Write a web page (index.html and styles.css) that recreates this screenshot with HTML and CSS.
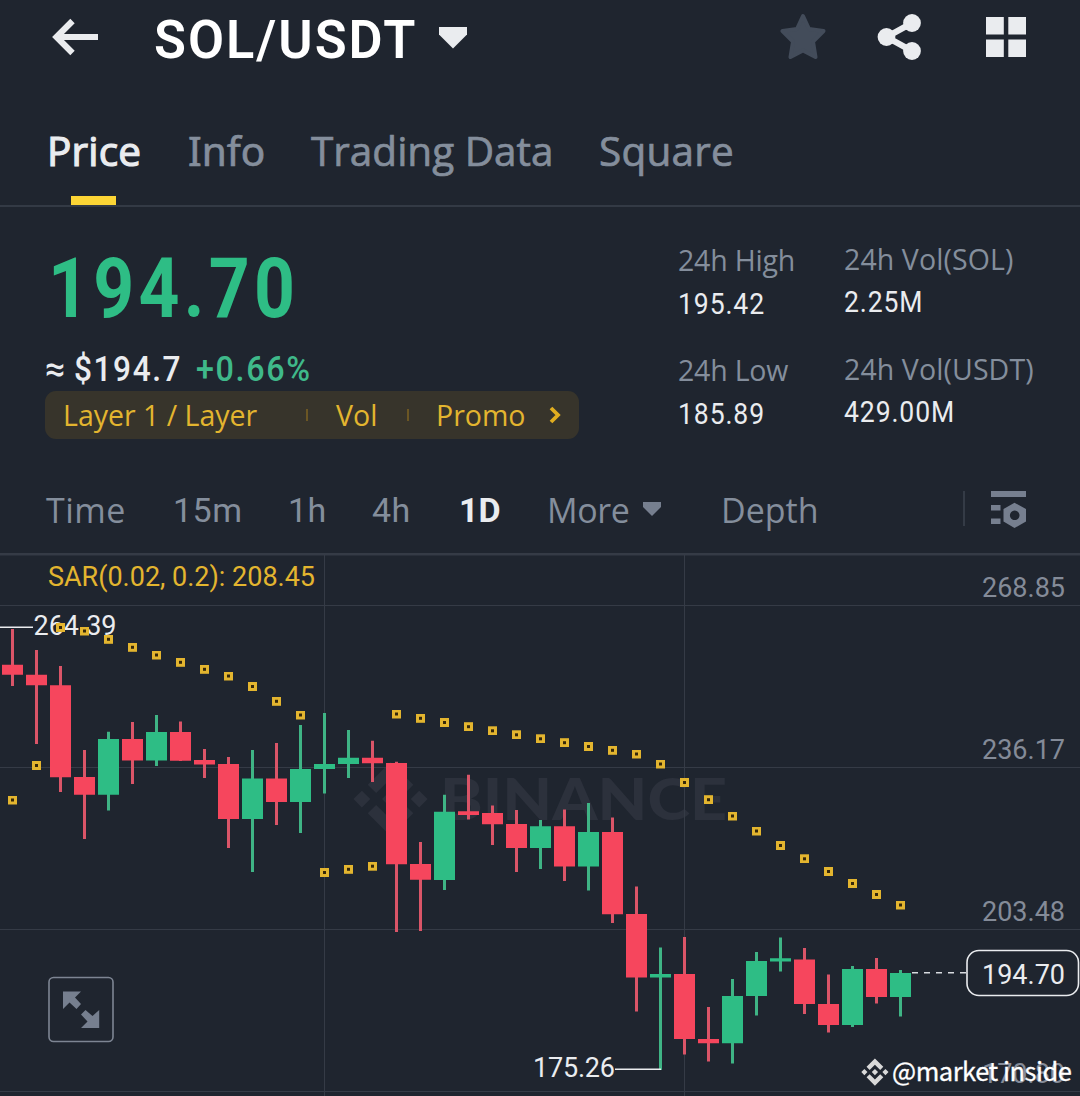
FILE: index.html
```html
<!DOCTYPE html>
<html lang="en">
<head>
<meta charset="utf-8">
<title>SOL/USDT</title>
<link rel="stylesheet" href="styles.css">
</head>
<body>
<div class="screen">
  <header class="topbar">
    <svg class="back" viewBox="0 0 46 38" width="46" height="38"><path d="M46 19H4M20.500 3L4.500 19l16 16" fill="none" stroke="#eaecef" stroke-width="6.200"/></svg>
    <h1 class="pair"><span>SOL/USDT</span></h1>
    <svg class="pair-caret" viewBox="0 0 28 22" width="28" height="22"><path d="M0 0h28v7.500L14 21.500 0 7.500z" fill="#eaecef"/></svg>
    <div class="actions">
      <svg viewBox="0 0 46 48" width="46" height="48"><path d="M23 3l6 13 14.500 2-10.500 10.500 2.500 15.500L23 37.500 10.500 44 13 28.500 2.500 18 17 16z" fill="#434c5a" stroke="#434c5a" stroke-width="4" stroke-linejoin="round"/></svg>
      <svg viewBox="0 0 44 48" width="44" height="48"><g fill="#eaecef"><circle cx="35" cy="10" r="8.900"/><circle cx="9.500" cy="24" r="8.900"/><circle cx="35" cy="38" r="8.900"/><path d="M35 10L9.500 24 35 38" fill="none" stroke="#eaecef" stroke-width="6"/></g></svg>
      <svg viewBox="0 0 40 40" width="40" height="40"><path d="M0 0h17.800v17.500H0zM22.300 0H40v17.500H22.300zM0 22.500h17.800V40H0zM22.300 22.500H40V40H22.300z" fill="#eaecef"/></svg>
    </div>
  </header>

  <nav class="tabs">
    <a class="tab active"><span class="t-price">Price</span></a>
    <a class="tab"><span class="t-info">Info</span></a>
    <a class="tab"><span class="t-data">Trading Data</span></a>
    <a class="tab"><span class="t-square">Square</span></a>
  </nav>

  <section class="summary">
    <div class="quote">
      <div class="last"><span>194.70</span></div>
      <div class="sub"><span class="approx">≈</span><span class="fiat"><span>$194.7</span></span><span class="change"><span>+0.66%</span></span></div>
      <div class="chip">
        <span class="c-layer">Layer 1 / Layer</span><i></i><span class="c-vol">Vol</span><i></i><span class="c-promo">Promo</span>
        <svg viewBox="0 0 12 18" width="12" height="18"><path d="M2 2l7 7-7 7" fill="none" stroke="#e0ad20" stroke-width="3.800"/></svg>
      </div>
    </div>
    <dl class="stats">
      <div><dt class="s-high">24h High</dt><dd>195.42</dd></div>
      <div><dt class="s-low">24h Low</dt><dd>185.89</dd></div>
    </dl>
    <dl class="stats volumes">
      <div><dt class="s-vsol">24h Vol(SOL)</dt><dd>2.25M</dd></div>
      <div><dt class="s-vusdt">24h Vol(USDT)</dt><dd>429.00M</dd></div>
    </dl>
  </section>

  <nav class="intervals">
    <span class="i-time">Time</span><span class="i-num">15m</span><span class="i-num">1h</span><span class="i-num">4h</span><span class="i-num selected">1D</span><span class="i-more">More</span>
    <svg class="more-caret" viewBox="0 0 18 14" width="18" height="14"><path d="M0 0h18v5L9 14 0 5z" fill="#767f8f"/></svg>
    <span class="i-depth">Depth</span>
    <b class="divider"></b>
    <svg class="settings" viewBox="0 0 36 38" width="36" height="38"><path d="M1 1h35v6H1zM1 15h9.500v5.500H1zM1 28.500h9.500V34H1z" fill="#767f8f"/><path fill-rule="evenodd" d="M24.500 12.800L36 19v12.500L24.500 38 13.500 31.500V19zM24.700 20.500a4.800 4.800 0 1 0 .01 0z" fill="#767f8f"/></svg>
  </nav>

  <svg class="chart" viewBox="0 552 1080 544" width="1080" height="544">
    <defs>
      <path id="logo" d="M38.730 53.200l24.590-24.580 24.600 24.600 14.300-14.310L63.320 0 24.420 38.900zM0 63.310l14.300-14.310 14.310 14.310-14.310 14.300zM38.730 73.410l24.590 24.590 24.600-24.600 14.310 14.290-38.900 38.910-38.910-38.880zM98 63.310l14.300-14.310 14.310 14.300-14.310 14.320zM77.830 63.300L63.320 48.780 48.810 63.280l14.510 14.500z"/>
      <marker id="sar" markerWidth="9" markerHeight="9" refX="4.500" refY="4.500" markerUnits="userSpaceOnUse"><path d="M0 0h9v9H0z" fill="#e3b52f"/><path d="M3 3h3v3H3z" fill="#35270a"/></marker>
    </defs>

    <g fill="#2c313c">
      <use href="#logo" transform="translate(353.500 762) scale(.585)"/>
      <text x="440" y="819.500" class="brand" textLength="287" lengthAdjust="spacingAndGlyphs">BINANCE</text>
    </g>

    <g class="grid">
      <path d="M0 554.300H1080" stroke-width="2.400"/>
      <path d="M0 605.500H1080M0 767.500H1080M0 929.500H1080M0 1091.500H1080M324.500 554V1096M684.500 554V1096"/>
    </g>

    <g class="axis">
      <text x="982" y="597" textLength="83">268.85</text>
      <text x="982" y="759" textLength="83">236.17</text>
      <text x="982" y="921" textLength="83">203.48</text>
      <text x="982" y="1083" textLength="83">170.80</text>
    </g>

    <path class="wick down" d="M12.500 629V686M36.500 650V744M60.500 666V792M84.500 750V839M132.500 722V784M180.500 721.500V761M204.500 749V778M228.500 757V848M276.500 743V825M372.500 740.700V782M396.500 761.700V932M420.500 842V931M468.500 774.700V819.500M492.500 805.500V845M516.500 810V872M564.500 809.500V881M612.500 817.500V923M636.500 886.500V1011.500M684.500 937V1054.500M708.500 1007V1061.500M804.500 948V1014M828.500 974.500V1032.500M876.500 958V1003.500"/>
    <path class="wick up" d="M108.500 731.700V810.500M156.500 715V766M252.500 750V872M300.500 725V833M324.500 713V793.500M348.500 730V778M444.500 794.700V890M540.500 820V869M588.500 803V890.500M660.500 947.500V1070M732.500 979V1063.500M756.500 952V1015.500M780.500 937.500V971.500M852.500 966V1027M900.500 970V1016.500"/>
    <path class="body down" d="M12.500 664.700V674.800M36.500 674.700V685.300M60.500 685.200V777.200M84.500 777V794.700M132.500 739V760.500M180.500 732V760.700M204.500 760V764.500M228.500 764V819M276.500 778.500V802M372.500 757.700V763.200M396.500 763V864.200M420.500 864V879.800M468.500 811.300V815M492.500 813V824.200M516.500 824V848M564.500 826.300V866.500M612.500 832V914.200M636.500 914V977.500M684.500 974V1039M708.500 1039V1043.300M804.500 959.500V1004M828.500 1004V1025M876.500 969V997"/>
    <path class="body up" d="M108.500 739V794.700M156.500 732V760.500M252.500 778.500V819M300.500 769V802M324.500 764V769M348.500 757.700V764M444.500 811.700V880M540.500 826.300V848M588.500 832V866.500M660.500 974V977.500M732.500 996V1043.200M756.500 961V996M780.500 958.300V961.500M852.500 969V1025M900.500 973V997"/>

    <path d="M912 972.700H966" stroke="#d8dbe0" stroke-width="1.600" stroke-dasharray="6"/>
    <rect x="967" y="950.500" width="111.500" height="45" rx="12" fill="#1f252f" stroke="#eaecef" stroke-width="1.600"/>
    <path d="M0 627.300H33M615 1069.300H661" stroke="#eaecef" stroke-width="1.600"/>
    <g class="mark">
      <text x="33.500" y="634.500" textLength="83">264.39</text>
      <text x="533" y="1077" textLength="82">175.26</text>
      <text x="982" y="984" textLength="83">194.70</text>
    </g>

    <path class="sar" d="M12.500 800L36.500 765.500 60.500 627.500 84.500 631 108.500 639.300 132.500 647.300 156.500 655 180.500 662.300 204.500 669.300 228.500 676 252.500 686.500 276.500 701.300 300.500 715 324.500 872.500 348.500 869.300 372.500 866.200 396.500 714 420.500 718.300 444.500 722.500 468.500 726.700 492.500 730.800 516.500 734.800 540.500 738.800 564.500 742.700 588.500 746.500 612.500 750.300 636.500 754 660.500 764 684.500 782.500 708.500 799.700 732.500 816 756.500 831 780.500 845.500 804.500 858.800 828.500 871.500 852.500 883.500 876.500 894.500 900.500 905"/>
    <text x="48" y="586" class="legend" textLength="267">SAR(0.02, 0.2): 208.45</text>

    <g fill="none" stroke="#7d8593" stroke-width="1.600"><rect x="49" y="977.500" width="64" height="64" rx="4.500"/></g>
    <path fill="#767f8f" d="M63 991.500h18l-6 6 6 6.500-4.500 5-7-6.500-6.500 6.500zM99.200 1028H81l6.500-6.500-6.500-7 4.500-4.500 7 6 6.700-6z"/>

    <use href="#logo" transform="translate(861.300 1058.500) scale(.215)" fill="#d9d9d9"/>
    <text x="892" y="1081" class="credit" textLength="180">@market inside</text>
  </svg>
</div>
</body>
</html>
```
FILE: styles.css
```css
* { box-sizing: border-box; }
body { margin: 0; background: #1f252f; }
h1, dl, dd { margin: 0; font-weight: inherit; }
svg { display: block; flex: none; }

.screen {
  width: 1080px;
  height: 1096px;
  overflow: hidden;
  color: #848e9c;
  font-family: "Open Sans", sans-serif;
  white-space: nowrap;
}

.topbar {
  display: flex;
  align-items: center;
  height: 74px;
  padding: 0 54px 0 52px;
}
.pair {
  width: 341px;
  padding: 4px 0 0 56px;
  color: #fff;
  font: 600 54.500px/74px Roboto, sans-serif;
  letter-spacing: 2.100px;
}
.pair span, .last span, .fiat span, .change span, .stats dd {
  display: inline-block;
  transform-origin: 0 0;
}
.pair span { transform: scaleX(.96); }
.pair-caret { margin-top: 1px; }
.actions { display: flex; flex: 1; align-items: center; justify-content: flex-end; }
.actions svg + svg { margin-left: 51px; }
.actions svg + svg + svg { margin-left: 65px; }

.tabs {
  display: grid;
  grid-template-columns: 141px 123px 288px 1fr;
  height: 133px;
  padding: 47px 0 0 47px;
  border-bottom: 2px solid #333a45;
  font-size: 40.500px;
  line-height: 60px;
  -webkit-text-stroke: 0.700px currentColor;
}
.tab { display: flex; flex-direction: column; }
.active { color: #eaecef; -webkit-text-stroke-width: 1.200px; }
.active::after {
  content: "";
  width: 45px;
  height: 9px;
  margin: 15px 0 0 24px;
  background: #fcd535;
}
.t-price { letter-spacing: 0.200px; }
.t-square { letter-spacing: 0.200px; }
.t-info { font-family: "Noto Sans", sans-serif; }

.summary {
  display: flex;
  height: 253px;
  padding: 34px 0 0 45px;
}
.quote { width: 633px; }
.last {
  padding: 8px 0 0 3px;
  color: #2ebd85;
  font: 700 83px/80px Roboto, sans-serif;
  letter-spacing: 5px;
}
.last span { transform: scaleX(.86); }
.sub {
  display: flex;
  height: 62px;
  padding-top: 20px;
  font: 500 35.500px/40px Roboto, sans-serif;
  letter-spacing: 1.800px;
}
.approx { width: 29px; color: #eaecef; }
.fiat { width: 122px; color: #eaecef; }
.fiat span { transform: scaleX(.89); }
.change { color: #3fb98a; }
.change span { transform: scaleX(.91); }
.chip {
  display: flex;
  align-items: center;
  width: 534px;
  height: 48px;
  padding-left: 18px;
  border-radius: 11px;
  background: #37342b;
  color: #e3b52f;
  font-size: 28.500px;
  line-height: 48px;
}
.chip i { width: 2px; height: 12px; background: #6b5624; }
.c-layer { width: 243px; }
.c-vol { width: 71px; margin-left: 28px; }
.c-promo { width: 113px; margin-left: 27px; }

.stats { width: 166px; font-size: 28.500px; line-height: 40px; }
.stats div { height: 110.500px; }
.stats dt { margin-top: -1px; }
.s-high, .s-low { letter-spacing: -0.200px; }
.stats dd {
  display: block;
  margin-top: 4px;
  color: #eaecef;
  font: 400 29.500px/40px Roboto, sans-serif;
  letter-spacing: 1px;
  transform: scaleX(.9);
}
.volumes { margin-top: -1px; }
.volumes dd { margin-top: 3px; }
.s-vsol, .s-vusdt { letter-spacing: 0.100px; }

.intervals {
  display: flex;
  align-items: center;
  height: 92px;
  padding: 8px 0 0 46px;
  font-size: 34px;
}
.i-time { width: 127px; letter-spacing: 0.500px; }
.i-num { width: 115px; font-family: Roboto, sans-serif; letter-spacing: 0.500px; }
.i-num + .i-num { width: 84px; }
.i-num + .i-num + .i-num { width: 87px; }
.i-num + .i-num + .selected { width: 88px; letter-spacing: 0; }
.selected { color: #eaecef; font-weight: 700; }
.i-more { width: 96px; letter-spacing: -0.400px; }
.more-caret { margin: -3px 60px 0 0; }
.i-depth { width: 242px; }
.divider { width: 2px; height: 35px; margin-top: -4px; background: #343b46; }
.settings { margin: -2px 0 0 25px; }

.grid path { fill: none; stroke: #353b46; }
.axis text, .mark text { font: 400 27px Roboto, sans-serif; }
.axis { fill: #848b98; }
.mark { fill: #eaecef; }
.legend { font: 400 27px Roboto, sans-serif; fill: #e3b52f; }
.brand { font: 900 57px Lato, sans-serif; }
.credit { font: 400 25.500px "Noto Sans CJK SC", "Noto Sans", sans-serif; fill: #fff; stroke: #fff; stroke-width: 0.300px; }
.wick, .body { fill: none; }
.wick { stroke-width: 3px; }
.body { stroke-width: 21px; }
.wick.down { stroke: #da5568; }
.wick.up { stroke: #3fb485; }
.body.down { stroke: #f6465d; }
.body.up { stroke: #2ebd85; }
.sar { fill: none; marker: url(#sar); }
```
